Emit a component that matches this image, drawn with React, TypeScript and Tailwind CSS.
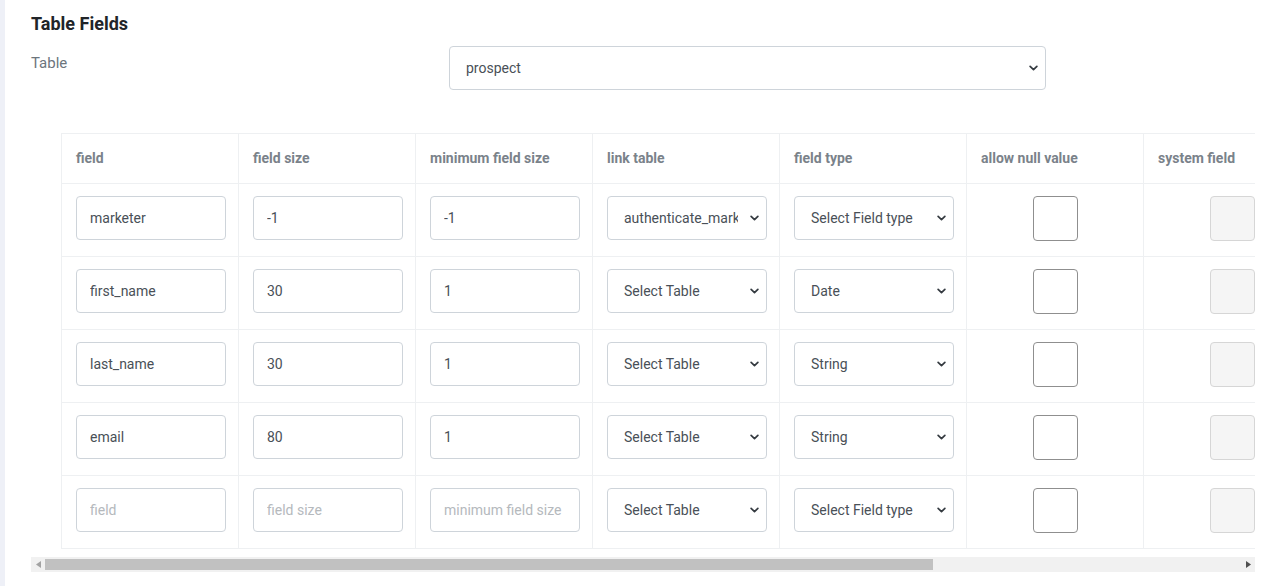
import React from 'react';

const font = { fontFamily: 'Roboto, "Liberation Sans", sans-serif' };

type Row = {
  field: string;
  size: string;
  min: string;
  link: string;
  type: string;
};

const rows: Row[] = [
  { field: 'marketer', size: '-1', min: '-1', link: 'authenticate_marketer', type: 'Select Field type' },
  { field: 'first_name', size: '30', min: '1', link: 'Select Table', type: 'Date' },
  { field: 'last_name', size: '30', min: '1', link: 'Select Table', type: 'String' },
  { field: 'email', size: '80', min: '1', link: 'Select Table', type: 'String' },
  { field: '', size: '', min: '', link: 'Select Table', type: 'Select Field type' },
];

const Chevron = () => (
  <svg
    className="pointer-events-none absolute right-[8px] top-1/2 -translate-y-1/2"
    width="9"
    height="9"
    viewBox="0 0 16 16"
    fill="none"
    stroke="#343a40"
    strokeWidth="3"
    strokeLinecap="round"
    strokeLinejoin="round"
  >
    <path d="M2 5l6 6 6-6" />
  </svg>
);

const Select = ({ value, className }: { value: string; className: string }) => (
  <div className={`relative ${className}`}>
    <select
      defaultValue={value}
      className="h-[44px] w-full appearance-none overflow-hidden rounded-[4px] border border-[#ced4da] bg-white pl-[16px] pr-[28px] text-[14px] text-[#495057] outline-none"
      style={font}
    >
      <option value={value}>{value}</option>
    </select>
    <Chevron />
  </div>
);

const TextInput = ({ value, placeholder }: { value: string; placeholder: string }) => (
  <input
    defaultValue={value}
    placeholder={placeholder}
    className="h-[44px] w-[150px] rounded-[4px] border border-[#ced4da] bg-white px-[13px] text-[14px] text-[#495057] outline-none placeholder:text-[#b5b9bd]"
    style={font}
  />
);

// columns past "system field" sit outside the visible scroll area
const headers = ['field', 'field size', 'minimum field size', 'link table', 'field type', 'allow null value', 'system field', '', ''];
const widths = ['w-[177px]', 'w-[177px]', 'w-[177px]', 'w-[187px]', 'w-[187px]', 'w-[177px]', 'w-[177px]', 'w-[177px]', 'w-[182px]'];

const cell = 'border border-[#eef0f2] px-[14px] pt-[12px] align-top';
const boxCell = 'border border-[#eef0f2] pt-[12px] align-top';

// stand-in for the horizontal scrollbar of the table wrapper
const ScrollBar = () => (
  <div className="flex h-[15px] bg-[#f1f1f1]">
    <div className="flex w-[14px] items-center justify-center">
      <svg width="5" height="7" viewBox="0 0 5 7">
        <path d="M5 0v7L0 3.5z" fill="#a3a3a3" />
      </svg>
    </div>
    <div className="flex flex-1 items-center">
      <div className="h-[11px] w-[74.25%] bg-[#c1c1c1]" />
    </div>
    <div className="flex w-[14px] items-center justify-center">
      <svg width="5" height="7" viewBox="0 0 5 7">
        <path d="M0 0v7l5-3.5z" fill="#505050" />
      </svg>
    </div>
  </div>
);

export default function App() {
  return (
    <div className="flex min-h-[586px] bg-white" style={font}>
      <div className="w-[5px] shrink-0 bg-[#eef0f7]" />
      <div className="min-w-0 flex-1 pl-[26px] pr-[20px]">
        <h2 className="pt-[13px] text-[18px] font-bold leading-[22px] text-[#212529]">Table Fields</h2>

        <div className="mt-[11px] flex">
          <div className="w-[418px] shrink-0 pt-[8px] text-[15px] leading-[18px] text-[#6c757d]">Table</div>
          <Select value="prospect" className="w-[597px]" />
        </div>

        <div className="mt-[43px]">
          <div className="overflow-hidden pb-[8px] pl-[30px]">
            <table className="w-[1608px] table-fixed border-collapse border border-[#dee2e6]">
              <thead>
                <tr className="h-[50px]">
                  {headers.map((h, i) => (
                    <th
                      key={i}
                      className={`${widths[i]} whitespace-nowrap border border-[#eef0f2] px-[14px] text-left align-middle text-[14px] font-bold text-[#7a828a]`}
                    >
                      {h}
                    </th>
                  ))}
                </tr>
              </thead>
              <tbody>
                {rows.map((r, i) => (
                  <tr key={i} className="h-[73px]">
                    <td className={cell}>
                      <TextInput value={r.field} placeholder="field" />
                    </td>
                    <td className={cell}>
                      <TextInput value={r.size} placeholder="field size" />
                    </td>
                    <td className={cell}>
                      <TextInput value={r.min} placeholder="minimum field size" />
                    </td>
                    <td className={cell}>
                      <Select value={r.link} className="w-[160px]" />
                    </td>
                    <td className={cell}>
                      <Select value={r.type} className="w-[160px]" />
                    </td>
                    <td className={boxCell}>
                      <div className="mx-auto h-[45px] w-[45px] rounded-[4px] border border-[#8f8f8f] bg-white" />
                    </td>
                    <td className={boxCell}>
                      <div className="mx-auto h-[45px] w-[45px] rounded-[4px] border border-[#d6d6d6] bg-[#f5f5f5]" />
                    </td>
                    <td className={boxCell}>
                      <div className="mx-auto h-[45px] w-[45px] rounded-[4px] border border-[#8f8f8f] bg-white" />
                    </td>
                    <td className={boxCell} />
                  </tr>
                ))}
              </tbody>
            </table>
          </div>
          <ScrollBar />
        </div>
      </div>
    </div>
  );
}
